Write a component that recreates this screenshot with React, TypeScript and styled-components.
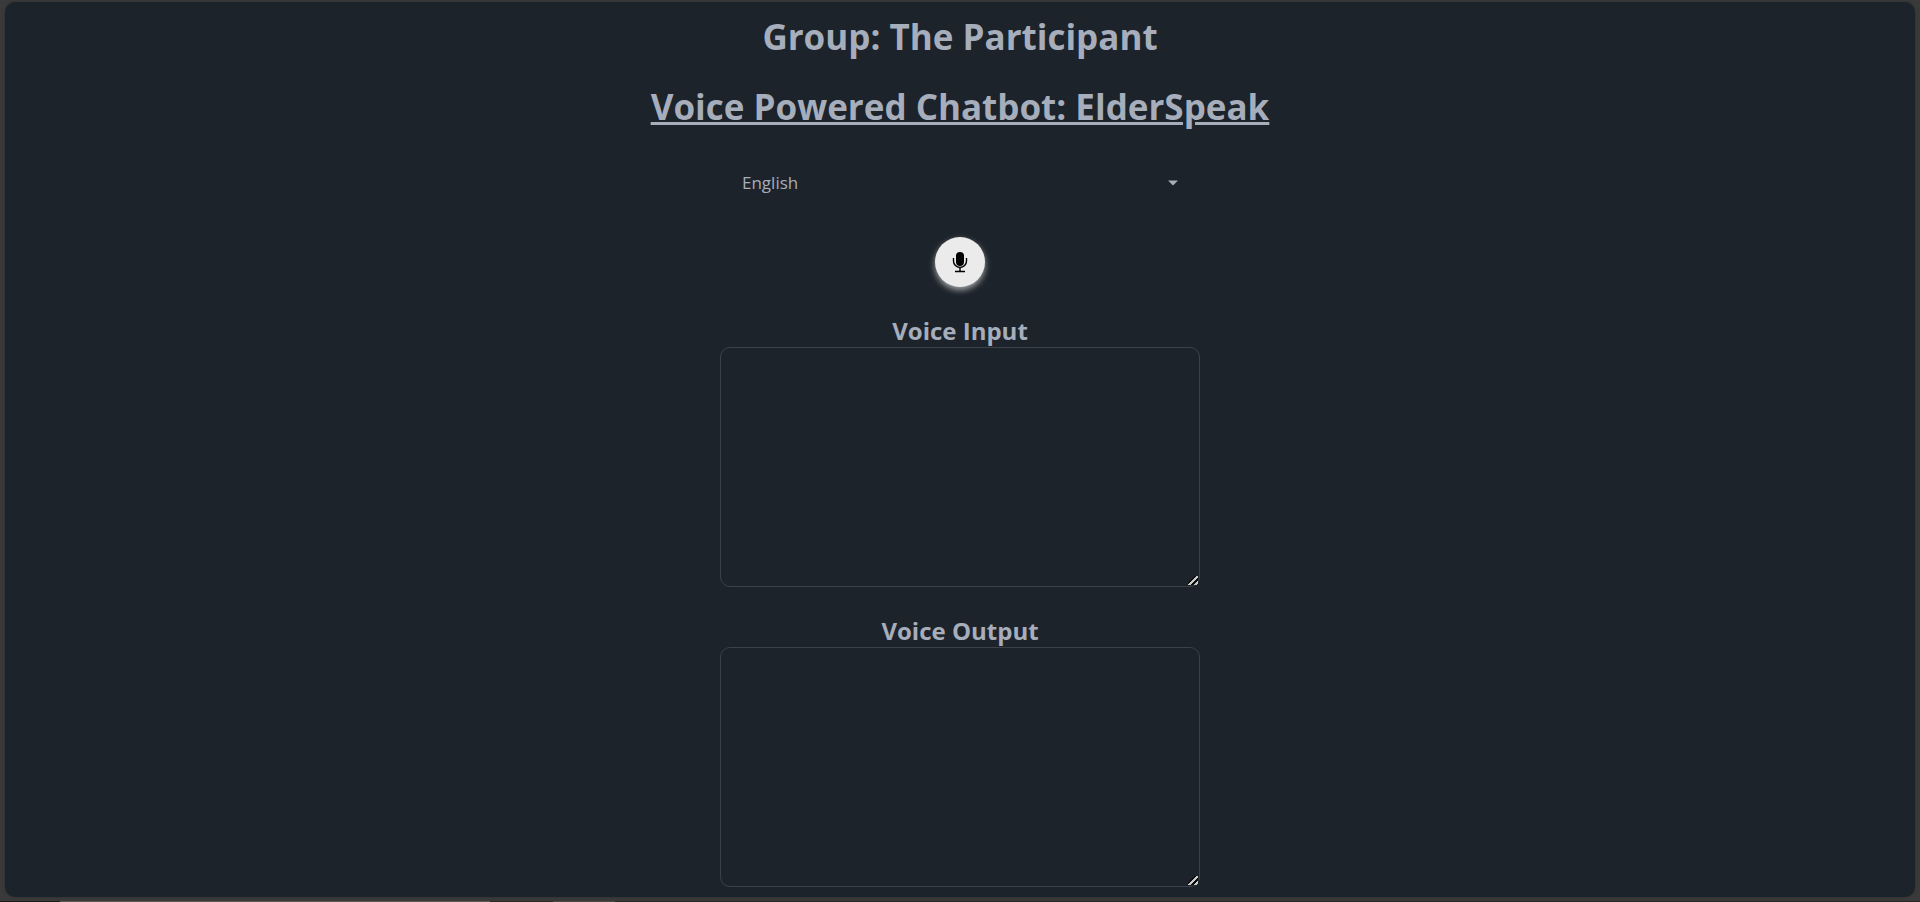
import React from "react";
import styled, { createGlobalStyle } from "styled-components";

const GlobalStyle = createGlobalStyle`
  *, *::before, *::after { box-sizing: border-box; }
  html { color-scheme: dark; background: #3a3a3a; }
  body {
    margin: 0;
    font-family: "Open Sans", "Noto Sans", sans-serif;
    font-size: 17px;
    line-height: 28px;
    color: #a6adbb;
  }
`;

const Frame = styled.div`
  display: flex;
  flex-direction: column;
  min-height: 100vh;
  padding: 2px 5px 0;
`;

const Panel = styled.main`
  flex: 1;
  display: flex;
  flex-direction: column;
  align-items: center;
  padding: 15px 16px 10px;
  border-radius: 10px;
  background: #1d232a;
  box-shadow: 0 0 3px #2c2e30;
`;

const Header = styled.header`
  display: flex;
  flex-direction: column;
  gap: 30px;
  margin-bottom: 32px;
`;

const Title = styled.h1<{ $underlined?: boolean }>`
  margin: 0;
  font-size: 35px;
  line-height: 40px;
  font-weight: 700;
  text-align: center;
  text-decoration: ${(p) => (p.$underlined ? "underline 3px" : "none")};
`;

const SelectWrap = styled.div`
  position: relative;
  width: 100%;
  max-width: 480px;
  margin-bottom: 30px;
`;

const Select = styled.select`
  appearance: none;
  width: 100%;
  height: 48px;
  padding: 0 40px 0 22px;
  border: 0;
  border-radius: 8px;
  background: transparent;
  color: inherit;
  font: inherit;
`;

const Arrow = styled.svg`
  position: absolute;
  right: 22px;
  top: 21px;
  pointer-events: none;
`;

const MicButton = styled.button`
  display: flex;
  align-items: center;
  justify-content: center;
  width: 50px;
  height: 50px;
  margin-bottom: 28px;
  padding: 0;
  border: 0;
  border-radius: 50%;
  background: #ebebeb;
  color: #000;
  box-shadow: 0 3px 6px rgba(255, 255, 255, 0.6);
`;

const Field = styled.section`
  display: flex;
  flex-direction: column;
  align-items: center;
  width: 100%;
  max-width: 480px;

  & + & { margin-top: 28px; }
`;

const FieldLabel = styled.label`
  font-size: 24px;
  line-height: 32px;
  font-weight: 700;
`;

const TextArea = styled.textarea`
  display: block;
  width: 100%;
  height: 240px;
  padding: 8px 16px;
  border: 1px solid #3a4149;
  border-radius: 10px;
  background: transparent;
  color: inherit;
  font: inherit;

  &::-webkit-resizer {
    background: linear-gradient(
        135deg,
        transparent 36%,
        #0c0e10 36% 44%,
        #c8c8c8 44% 60%,
        #0c0e10 60% 78%,
        #c8c8c8 78% 92%,
        transparent 92%
      )
      right 1px bottom 1px / 10px 9px no-repeat;
  }
`;

const DesktopEdge = styled.div`
  height: 1px;
  margin: 4px -5px 0;
  background: linear-gradient(
    to right,
    #1c1a1a 60px,
    #5a5755 60px 490px,
    #2b2820 490px 553px,
    #4a473c 553px 615px,
    #262626 615px
  );
`;

const MicIcon = () => (
  <svg width="16" height="22" viewBox="0 0 16 22" fill="none" aria-hidden="true">
    <rect x="4" y="1" width="8" height="14" rx="4" fill="currentColor" />
    <path d="M1.500 7v3a6.500 6.500 0 0 0 13 0V7" stroke="currentColor" strokeWidth="1.400" />
    <path d="M8 16.500v3.500M3 20.500h10" stroke="currentColor" strokeWidth="1.400" />
  </svg>
);

export default function App() {
  return (
    <>
      <GlobalStyle />
      <Frame>
        <Panel>
          <Header>
            <Title>Group: The Participant</Title>
            <Title $underlined>Voice Powered Chatbot: ElderSpeak</Title>
          </Header>
          <SelectWrap>
            <Select aria-label="Language" defaultValue="en">
              <option value="en">English</option>
            </Select>
            <Arrow width="10" height="6" viewBox="0 0 10 6" aria-hidden="true">
              <path d="M0 0.500h10L5 5.500z" fill="currentColor" />
            </Arrow>
          </SelectWrap>
          <MicButton type="button" aria-label="Start recording">
            <MicIcon />
          </MicButton>
          <Field>
            <FieldLabel htmlFor="voice-input">Voice Input</FieldLabel>
            <TextArea id="voice-input" />
          </Field>
          <Field>
            <FieldLabel htmlFor="voice-output">Voice Output</FieldLabel>
            <TextArea id="voice-output" />
          </Field>
        </Panel>
        <DesktopEdge />
      </Frame>
    </>
  );
}
